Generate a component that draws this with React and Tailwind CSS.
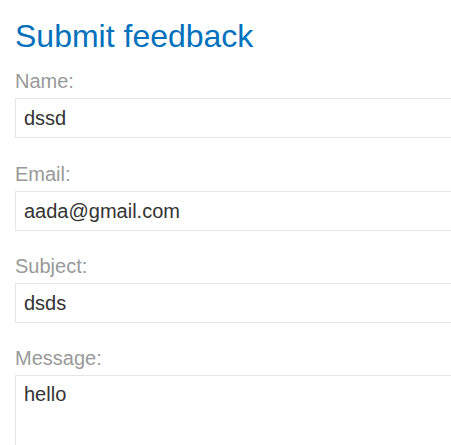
export default function App() {
    const fields = [
        { label: "Name:", value: "dssd" },
        { label: "Email:", value: "aada@gmail.com" },
        { label: "Subject:", value: "dsds" },
    ];

    return (
        <div
            className="w-[451px] h-[445px] overflow-hidden bg-white px-[15px] pt-[18px]"
            style={{ fontFamily: '"Liberation Sans", Arial, sans-serif' }}
        >
            <h1 className="text-[32px] leading-[37px] text-[#0071bc] font-normal">Submit feedback</h1>

            <form className="mt-[15px] flex flex-col w-[600px]">
                {fields.map((field, i) => (
                    <div key={field.label} className={`flex flex-col ${i === 0 ? "mb-[25px]" : "mb-[24px]"}`}>
                        <label className="text-[20px] leading-[23px] text-[#999999] mb-[5px]">{field.label}</label>
                        <input
                            type="text"
                            defaultValue={field.value}
                            className="h-[40px] border border-[#e6e6e6] px-[8px] text-[20px] leading-[23px] text-[#333333] outline-none"
                        />
                    </div>
                ))}

                {/* message box runs off the bottom */}
                <div className="flex flex-col">
                    <label className="text-[20px] leading-[23px] text-[#999999] mb-[5px]">Message:</label>
                    <textarea
                        defaultValue="hello"
                        className="h-[150px] border border-[#e6e6e6] px-[8px] py-[7px] text-[20px] leading-[23px] text-[#333333] outline-none resize-none"
                    />
                </div>
            </form>
        </div>
    );
}
